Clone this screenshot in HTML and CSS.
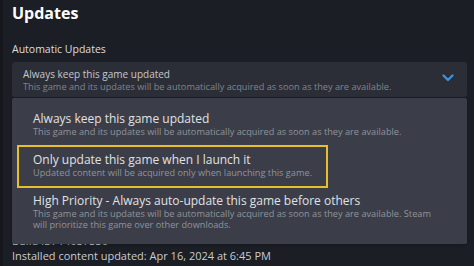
FILE: index.html
```html
<!DOCTYPE html>
<html lang="en">
<head>
  <meta charset="UTF-8">
  <meta name="viewport" content="width=device-width, initial-scale=1.0">
  <title>Updates</title>
  <link rel="stylesheet" href="styles.css">
</head>
<body>
  <div class="page">
    <h1 class="heading">Updates</h1>

    <div class="field">
      <div class="field-label">Automatic Updates</div>

      <!-- current value -->
      <div class="select">
        <div class="select-text">
          <div class="select-title">Always keep this game updated</div>
          <div class="desc">This game and its updates will be automatically acquired as soon as they are available.</div>
        </div>
        <svg class="chevron" width="12" height="8" viewBox="0 0 12 8">
          <polyline points="1.5,1.5 6,6 10.5,1.5" fill="none" stroke="#3f93dc" stroke-width="2.2" stroke-linecap="round" stroke-linejoin="round"/>
        </svg>
      </div>

      <!-- open dropdown -->
      <div class="menu">
        <div class="option">
          <div class="option-title">Always keep this game updated</div>
          <div class="desc">This game and its updates will be automatically acquired as soon as they are available.</div>
        </div>
        <div class="option focused">
          <div class="option-title">Only update this game when I launch it</div>
          <div class="desc">Updated content will be acquired only when launching this game.</div>
        </div>
        <div class="option">
          <div class="option-title">High Priority - Always auto-update this game before others</div>
          <div class="desc">This game and its updates will be automatically acquired as soon as they are available. Steam will prioritize this game over other downloads.</div>
        </div>
      </div>
    </div>

    <div class="info">
      <div class="info-line">Build ID: 14037330</div>
      <div class="info-line">Installed content updated: Apr 16, 2024 at 6:45 PM</div>
    </div>
  </div>
</body>
</html>
```

FILE: styles.css
```css
body {
  margin: 0;
  background: #1b1e25;
  font-family: "Open Sans", Arial, sans-serif;
  color: #dcdee1;
}

.page {
  min-height: 266px;
  box-sizing: border-box;
  border-left: 3px solid #15171c;
  padding: 3px 7px 0 9px;
}

.heading {
  margin: 0;
  font-size: 16px;
  line-height: 20px;
  font-weight: 700;
  color: #ffffff;
}

.field {
  position: relative;
  margin-top: 19px;
}

.field-label {
  font-size: 10.5px;
  line-height: 14px;
  color: #dcdde0;
  margin-bottom: 6px;
}

.select {
  display: flex;
  align-items: center;
  justify-content: space-between;
  height: 35px;
  box-sizing: border-box;
  padding: 0 13px 0 11px;
  background: #2b2e37;
  border-radius: 3px;
}

.select-title {
  font-size: 10px;
  line-height: 13px;
  color: #c5c7cb;
}

.desc {
  font-size: 9.2px;
  line-height: 11px;
  color: #80848b;
}

.chevron {
  margin-top: -4px;
}

.menu {
  position: absolute;
  top: 100%;
  left: 0;
  right: 0;
  margin-top: 1px;
  padding: 8px 5px 6px;
  background: #3b3e48;
  border-radius: 2px;
  box-shadow: 0 1px 3px rgba(0, 0, 0, 0.25);
}

.option {
  width: fit-content;
  padding: 6px 14px 8px;
  border: 2px solid transparent;
  margin: -2px 0;
}

.option.focused {
  border-color: #e6bf2a;
}

.option-title {
  font-size: 12px;
  line-height: 14px;
  color: #e0e1e4;
}

.option .desc {
  color: #90939a;
}

.info {
  margin-top: 136px;
}

.info-line {
  font-size: 11px;
  line-height: 15px;
  color: #c9cbcf;
}
```
